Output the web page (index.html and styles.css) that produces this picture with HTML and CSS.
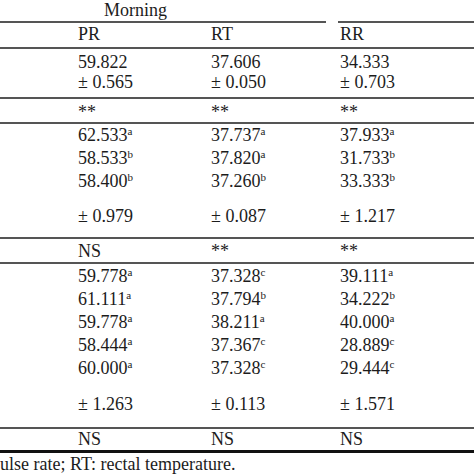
FILE: index.html
```html
<!DOCTYPE html>
<html>
<head>
<meta charset="utf-8">
<link rel="stylesheet" href="styles.css">
</head>
<body>
<div class="page">
  <div class="group-head">
    <div class="g1">Morning</div>
    <div class="g2"></div>
  </div>

  <div class="sec s-head">
    <div class="row"><span class="c0"></span><span class="c1">PR</span><span class="c2">RT</span><span class="c3">RR</span></div>
  </div>

  <div class="sec s-base">
    <div class="row r20"><span class="c0"></span><span class="c1">59.822</span><span class="c2">37.606</span><span class="c3">34.333</span></div>
    <div class="row r20"><span class="c0"></span><span class="c1">± 0.565</span><span class="c2">± 0.050</span><span class="c3">± 0.703</span></div>
  </div>

  <div class="sec s-sig1">
    <div class="row r20"><span class="c0"></span><span class="c1">**</span><span class="c2">**</span><span class="c3">**</span></div>
  </div>

  <div class="sec s-d1">
    <div class="row"><span class="c0"></span><span class="c1">62.533<sup>a</sup></span><span class="c2">37.737<sup>a</sup></span><span class="c3">37.933<sup>a</sup></span></div>
    <div class="row"><span class="c0"></span><span class="c1">58.533<sup>b</sup></span><span class="c2">37.820<sup>a</sup></span><span class="c3">31.733<sup>b</sup></span></div>
    <div class="row"><span class="c0"></span><span class="c1">58.400<sup>b</sup></span><span class="c2">37.260<sup>b</sup></span><span class="c3">33.333<sup>b</sup></span></div>
    <div class="row sem1"><span class="c0"></span><span class="c1">± 0.979</span><span class="c2">± 0.087</span><span class="c3">± 1.217</span></div>
  </div>

  <div class="sec s-sig2">
    <div class="row r20"><span class="c0"></span><span class="c1">NS</span><span class="c2">**</span><span class="c3">**</span></div>
  </div>

  <div class="sec s-d2">
    <div class="row"><span class="c0"></span><span class="c1">59.778<sup>a</sup></span><span class="c2">37.328<sup>c</sup></span><span class="c3">39.111<sup>a</sup></span></div>
    <div class="row"><span class="c0"></span><span class="c1">61.111<sup>a</sup></span><span class="c2">37.794<sup>b</sup></span><span class="c3">34.222<sup>b</sup></span></div>
    <div class="row"><span class="c0"></span><span class="c1">59.778<sup>a</sup></span><span class="c2">38.211<sup>a</sup></span><span class="c3">40.000<sup>a</sup></span></div>
    <div class="row"><span class="c0"></span><span class="c1">58.444<sup>a</sup></span><span class="c2">37.367<sup>c</sup></span><span class="c3">28.889<sup>c</sup></span></div>
    <div class="row"><span class="c0"></span><span class="c1">60.000<sup>a</sup></span><span class="c2">37.328<sup>c</sup></span><span class="c3">29.444<sup>c</sup></span></div>
    <div class="row sem2"><span class="c0"></span><span class="c1">± 1.263</span><span class="c2">± 0.113</span><span class="c3">± 1.571</span></div>
  </div>

  <div class="sec s-last">
    <div class="row r20"><span class="c0"></span><span class="c1">NS</span><span class="c2">NS</span><span class="c3">NS</span></div>
  </div>

  <p class="note">pulse rate; RT: rectal temperature.</p>
</div>
</body>
</html>
```

FILE: styles.css
```css
html, body {
  margin: 0;
  padding: 0;
  background: #ffffff;
  overflow: hidden;
}

.page {
  width: 520px;
  font-family: "Liberation Serif", "Times New Roman", serif;
  font-size: 18px;
  color: #1c1c1c;
}

.group-head {
  display: flex;
}

.g1 {
  width: 222px;
  padding-left: 104px;
  line-height: 21px;
  height: 21px;
  border-bottom: 2px solid #555555;
}

.g2 {
  flex: 1;
  margin-left: 12px;
  border-bottom: 2px solid #555555;
}

.sec {
  border-bottom: 2px solid #555555;
}

.row {
  display: flex;
  line-height: 23px;
  height: 23px;
  white-space: nowrap;
}

.row.r20 {
  line-height: 20px;
  height: 20px;
}

.c0 { width: 78px; flex: none; }
.c1 { width: 133px; flex: none; }
.c2 { width: 129px; flex: none; }
.c3 { flex: 1; }

sup {
  font-size: 11px;
  line-height: 0;
  vertical-align: 6px;
}

.s-head { padding-bottom: 1px; }
.s-base { padding-top: 3px; padding-bottom: 5px; }
.s-sig1 { padding-top: 3px; }
.s-d1 { padding-bottom: 9px; }
.sem1 { margin-top: 12px; }
.s-sig2 { padding-top: 2px; padding-bottom: 1px; }
.s-d2 { padding-top: 1px; padding-bottom: 11px; }
.sem2 { margin-top: 13px; }
.s-last {
  padding-bottom: 1px;
  border-bottom: 3px solid #111111;
}

.note {
  margin: 1px 0 0 0;
  line-height: 20px;
  text-indent: -9px;
  white-space: nowrap;
}
```
